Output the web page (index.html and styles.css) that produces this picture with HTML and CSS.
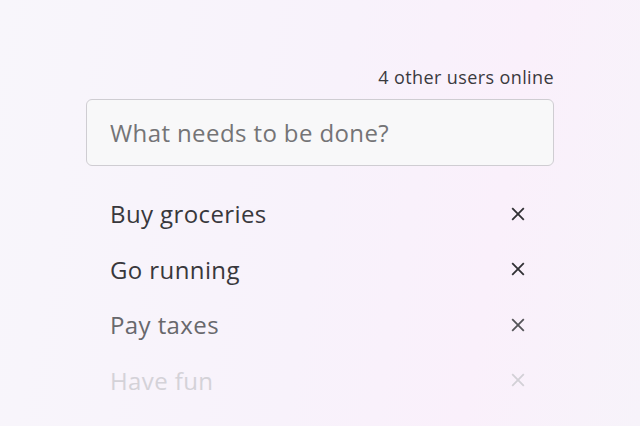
FILE: index.html
```html
<!DOCTYPE html>
<html lang="en">
<head>
<meta charset="utf-8">
<title>Todos</title>
<link rel="stylesheet" href="styles.css">
</head>
<body>
<main class="app">
  <p class="presence">4 other users online</p>
  <input class="new-todo" type="text" placeholder="What needs to be done?">
  <ul class="todos">
    <li class="todo tone-1"><span class="label">Buy groceries</span><button class="remove" aria-label="Remove"><svg viewBox="0 0 16 16" width="16" height="16"><path d="M2.2 2.2 13.8 13.8 M13.8 2.2 2.2 13.8"/></svg></button></li>
    <li class="todo tone-1"><span class="label">Go running</span><button class="remove" aria-label="Remove"><svg viewBox="0 0 16 16" width="16" height="16"><path d="M2.2 2.2 13.8 13.8 M13.8 2.2 2.2 13.8"/></svg></button></li>
    <li class="todo tone-2"><span class="label">Pay taxes</span><button class="remove" aria-label="Remove"><svg viewBox="0 0 16 16" width="16" height="16"><path d="M2.2 2.2 13.8 13.8 M13.8 2.2 2.2 13.8"/></svg></button></li>
    <li class="todo tone-3"><span class="label">Have fun</span><button class="remove" aria-label="Remove"><svg viewBox="0 0 16 16" width="16" height="16"><path d="M2.2 2.2 13.8 13.8 M13.8 2.2 2.2 13.8"/></svg></button></li>
  </ul>
</main>
</body>
</html>
```
FILE: styles.css
```css
html, body {
  margin: 0;
  padding: 0;
  height: 100%;
}
body {
  background: linear-gradient(100deg, #f8f6fb 0%, #f8f2fb 50%, #faf0fb 75%, #f7f3fa 100%);
  font-family: "Open Sans", "Noto Sans", sans-serif;
  letter-spacing: 0.025em;
  color: #333;
  display: flex;
  justify-content: center;
  overflow: hidden;
}
.app {
  width: 468px;
  padding-top: 65px;
  display: flex;
  flex-direction: column;
}
.presence {
  margin: 0 0 10px;
  text-align: right;
  font-size: 18px;
  line-height: 24px;
  color: #3a3a3e;
}
.new-todo {
  box-sizing: border-box;
  width: 100%;
  height: 67px;
  margin: 0;
  padding: 0 23px;
  border: 1px solid #cfcdd2;
  border-radius: 6px;
  background: #f8f8f9;
  font-family: inherit;
  letter-spacing: inherit;
  font-size: 24px;
  color: #333;
  outline: none;
}
.new-todo::placeholder {
  color: #747476;
}
.todos {
  list-style: none;
  margin: 20px 0 0;
  padding: 0;
}
.todo {
  display: flex;
  align-items: center;
  justify-content: space-between;
  height: 55.5px;
  padding: 0 28px 0 24px;
  font-size: 24px;
}
.remove {
  border: 0;
  background: none;
  padding: 0;
  width: 16px;
  height: 16px;
  display: flex;
}
.remove svg {
  stroke: currentColor;
  stroke-width: 1.8;
  fill: none;
}
.tone-1 { color: #38383c; }
.tone-1 .remove { color: #303034; }
.tone-2 { color: #68686c; }
.tone-2 .remove { color: #545458; }
.tone-3 { color: #d4d2d8; }
.tone-3 .remove { color: #d2d0d6; }
```
